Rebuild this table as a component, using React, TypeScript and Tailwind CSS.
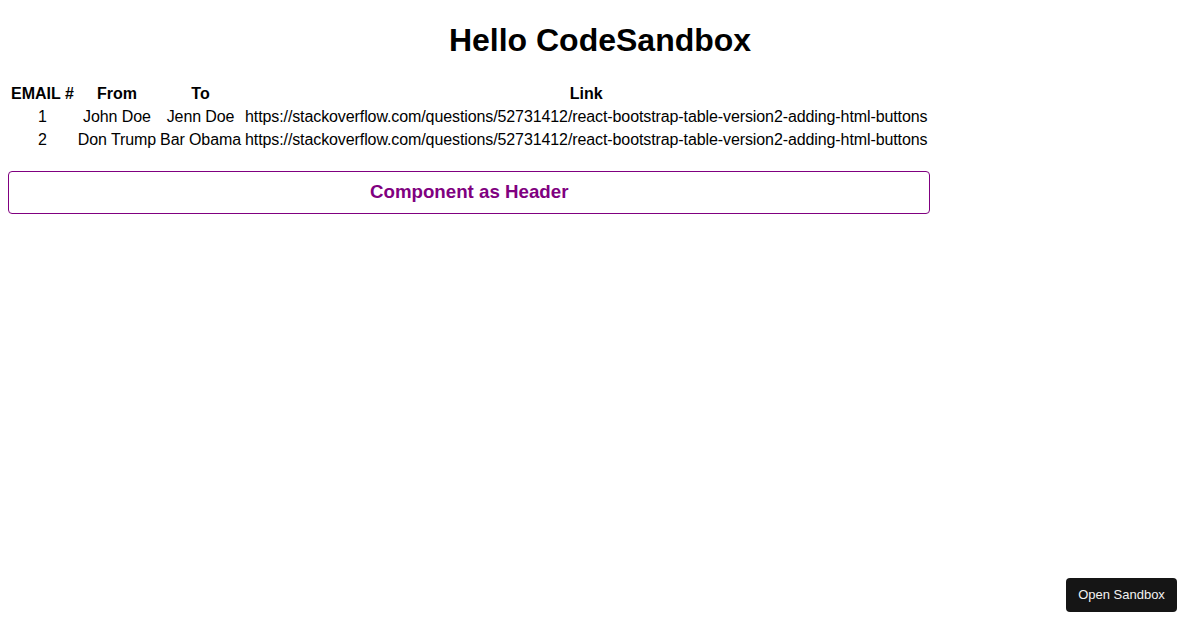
const rows = [
  { id: 1, from: 'John Doe', to: 'Jenn Doe', link: 'https://stackoverflow.com/questions/52731412/react-bootstrap-table-version2-adding-html-buttons' },
  { id: 2, from: 'Don Trump', to: 'Bar Obama', link: 'https://stackoverflow.com/questions/52731412/react-bootstrap-table-version2-adding-html-buttons' },
];

export default function App() {
  return (
    <div className="min-h-[630px] bg-white px-2 text-black font-['Liberation_Sans',Arial,sans-serif] text-base">
      <h1 className="pt-[22px] pb-[22px] text-center text-[32px] font-bold leading-[36.8px]">Hello CodeSandbox</h1>
      <div className="w-fit">
        <table className="border-separate border-spacing-[2px]">
          <thead>
            <tr>
              {['EMAIL #', 'From', 'To', 'Link'].map((h) => (
                <th key={h} className="p-px text-center font-bold leading-[19px]">{h}</th>
              ))}
            </tr>
          </thead>
          <tbody>
            {rows.map((r) => (
              <tr key={r.id}>
                <td className="p-px text-center leading-[19px] tracking-[-0.1px]">{r.id}</td>
                <td className="p-px text-center leading-[19px] tracking-[-0.1px]">{r.from}</td>
                <td className="p-px text-center leading-[19px] tracking-[-0.1px]">{r.to}</td>
                <td className="p-px text-center leading-[19px] tracking-[-0.1px]">{r.link}</td>
              </tr>
            ))}
          </tbody>
        </table>
        <div className="mt-[19px] flex h-[43px] items-center justify-center rounded-[4px] border border-[#800080]">
          <h3 className="text-[18.72px] font-bold text-[#800080]">Component as Header</h3>
        </div>
      </div>
      <button className="fixed right-[23px] bottom-[18px] flex h-[34px] w-[111px] items-center justify-center rounded-[4px] bg-[#151515] text-[13px] text-[#f2f2f2] font-['Liberation_Sans',Arial,sans-serif]">
        Open Sandbox
      </button>
    </div>
  );
}
